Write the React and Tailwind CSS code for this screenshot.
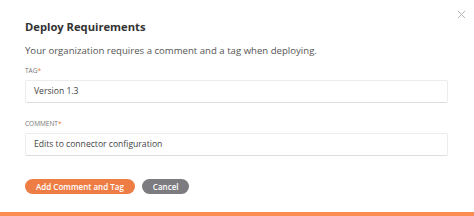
import React from 'react';

export default function App() {
  return (
    <div className="relative w-[474px] h-[216px] bg-white overflow-hidden" style={{ fontFamily: '"Open Sans", sans-serif' }}>
      {/* Close */}
      <button className="absolute right-[8px] top-[10px] w-[9px] h-[9px] text-[#b5b5b5]">
        <svg viewBox="0 0 10 10" className="w-full h-full" stroke="currentColor" strokeWidth="1.1">
          <path d="M1 1L9 9M9 1L1 9" />
        </svg>
      </button>

      <div className="flex flex-col px-[25px] pt-[19px]">
        <h2 className="text-[11.2px] leading-[16px] font-bold text-[#333]">Deploy Requirements</h2>
        <p className="mt-[9px] text-[9.6px] leading-[14px] text-[#555]">
          Your organization requires a comment and a tag when deploying.
        </p>

        <label className="mt-[8px] text-[6.5px] leading-[9px] uppercase text-[#777]">
          Tag<span className="text-[#f07a3a]">*</span>
        </label>
        <div className="mt-[5px] w-[423px] h-[23px] flex items-center px-[8px] border border-[#ececec] border-b-[#dedede] rounded-[2px] text-[8.6px] text-[#444]">
          Version 1.3
        </div>

        <label className="mt-[16px] text-[6.5px] leading-[9px] uppercase text-[#777]">
          Comment<span className="text-[#f07a3a]">*</span>
        </label>
        <div className="mt-[5px] w-[423px] h-[23px] flex items-center px-[8px] border border-[#ececec] border-b-[#dedede] rounded-[2px] text-[8.6px] text-[#444]">
          Edits to connector configuration
        </div>

        <div className="mt-[23px] flex items-center gap-[7px]">
          <button className="h-[15px] px-[11px] rounded-full bg-[#ee7d45] text-white text-[8px] font-semibold leading-none">
            Add Comment and Tag
          </button>
          <button className="h-[15px] px-[11px] rounded-full bg-[#7b7b80] text-white text-[8px] font-semibold leading-none">
            Cancel
          </button>
        </div>
      </div>

      <div className="absolute left-0 right-0 bottom-0 h-[4px] bg-[#f98d52]" />
    </div>
  );
}
